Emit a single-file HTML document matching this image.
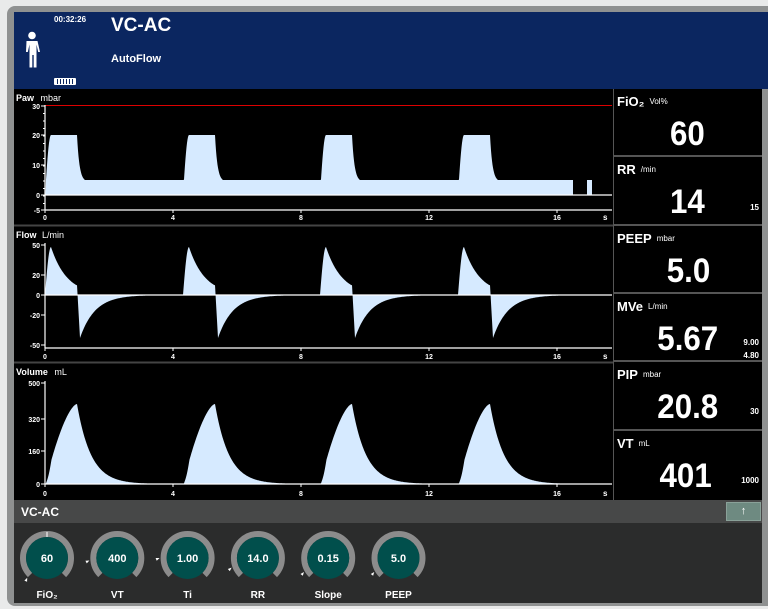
<!DOCTYPE html>
<html><head><meta charset="utf-8"><style>
*{margin:0;padding:0;box-sizing:border-box}
body{width:768px;height:609px;background:#e9eaea;position:relative;overflow:hidden;font-family:"Liberation Sans",Arial,sans-serif;font-weight:bold;color:#fff}
.frame{position:absolute;left:7px;top:6px;width:770px;height:600px;background:#8f9191;border-radius:8px}
.hdr{position:absolute;left:14px;top:12px;width:760px;height:77px;background:#0b2660}
.abs{position:absolute}
.panel{position:absolute;background:#000}
.np{position:absolute;left:613px;width:149px;background:#000;border-bottom:2px solid #555;border-left:1px solid #555}
.np .l{position:absolute;left:3px;top:5px;font-size:13px}
.np .l small{font-size:8px;font-weight:normal;margin-left:5px;vertical-align:2px}
.np .v{position:absolute;top:26px;font-size:34px;transform:scaleX(0.92);transform-origin:right center}
.np .s{position:absolute;right:3px;font-size:8px}
</style></head><body>
<div class="frame"></div>
<div class="hdr">
<svg class="abs" style="left:9px;top:19px" width="18" height="38" viewBox="0 0 18 38"><circle cx="9" cy="4.5" r="3.8" fill="#fff"/><path d="M3.5 10h11l2.5 11h-1.8l-1.7-7.5v23h-2.8v-12.5h-1.4v12.5h-2.8v-23l-1.7 7.5h-1.8z" fill="#fff"/></svg>
<div class="abs" style="left:40px;top:3px;font-size:8px">00:32:26</div>
<div class="abs" style="left:40px;top:66px;width:22px;height:7px;border:1px solid #fff;border-radius:1px;background:repeating-linear-gradient(90deg,#fff 0 2px,#0b2660 2px 3px)"></div>
<div class="abs" style="left:97px;top:3px;font-size:19px">VC-AC</div>
<div class="abs" style="left:97px;top:41px;font-size:11px">AutoFlow</div>
</div>
<div class="panel" style="left:14px;top:89px;width:599px;height:411px"></div>
<svg class="abs" style="left:0;top:0" width="768" height="609" font-family="Liberation Sans,Arial,sans-serif">
<g fill="#fff" font-size="9" font-weight="bold"><text x="16" y="101">Paw <tspan font-weight="normal" dx="4">mbar</tspan></text>
<text x="16" y="238">Flow <tspan font-weight="normal" dx="3">L/min</tspan></text>
<text x="16" y="375">Volume <tspan font-weight="normal" dx="4">mL</tspan></text></g>
<line x1="14" y1="225.5" x2="613" y2="225.5" stroke="#444" stroke-width="2"/>
<line x1="14" y1="362.5" x2="613" y2="362.5" stroke="#444" stroke-width="2"/>
<line x1="45" y1="105.5" x2="612" y2="105.5" stroke="#d00" stroke-width="1"/>
<path id="paw" fill="#d6eaff"/>
<path id="flow" fill="#d6eaff"/>
<path id="vol" fill="#d6eaff"/>
<g stroke="#fff" stroke-width="1.2">
<line x1="45" y1="105" x2="45" y2="210"/><line x1="45" y1="210" x2="612" y2="210"/><line x1="45" y1="195" x2="612" y2="195"/>
<line x1="45" y1="243" x2="45" y2="348"/><line x1="45" y1="348" x2="612" y2="348"/><line x1="45" y1="295" x2="612" y2="295"/>
<line x1="45" y1="381" x2="45" y2="484"/><line x1="45" y1="484" x2="612" y2="484"/>
</g>
<g id="ticks" stroke="#fff" stroke-width="1"></g>
<g id="lbls" fill="#fff" font-size="7" font-weight="bold"></g>
</svg>
<div class="np" style="top:89px;height:68px"><div class="l">FiO₂<small>Vol%</small></div><div class="v" style="right:57px">60</div></div>
<div class="np" style="top:157px;height:69px"><div class="l">RR<small>/min</small></div><div class="v" style="right:57px">14</div><div class="s" style="top:46px">15</div></div>
<div class="np" style="top:226px;height:68px"><div class="l">PEEP<small>mbar</small></div><div class="v" style="right:52px">5.0</div></div>
<div class="np" style="top:294px;height:68px"><div class="l">MVe<small>L/min</small></div><div class="v" style="right:44px">5.67</div><div class="s" style="top:44px">9.00</div><div class="s" style="top:57px">4.80</div></div>
<div class="np" style="top:362px;height:69px"><div class="l">PIP<small>mbar</small></div><div class="v" style="right:44px">20.8</div><div class="s" style="top:45px">30</div></div>
<div class="np" style="top:431px;height:69px;border-bottom:0"><div class="l">VT<small>mL</small></div><div class="v" style="right:50px">401</div><div class="s" style="top:45px">1000</div></div>
<div class="abs" style="left:14px;top:500px;width:748px;height:23px;background:#474848"><div class="abs" style="left:7px;top:5px;font-size:12px">VC-AC</div>
<div class="abs" style="left:712px;top:2px;width:35px;height:19px;background:#6e8a81;border:1px solid #8aa199;text-align:center;font-size:11px;line-height:17px">↑</div></div>
<div class="abs" style="left:14px;top:523px;width:748px;height:80px;background:#2b2c2c"></div>
<svg class="abs" style="left:0;top:520px" width="768" height="89" id="knobs" font-family="Liberation Sans,Arial,sans-serif"></svg>
<script>
function P(x0,y0,pts){let d='M'+x0+' '+y0;pts.forEach(p=>d+='L'+p[0].toFixed(1)+' '+p[1].toFixed(1));return d+'Z';}
const st=[45,183,320,458];
let pw=[];
for(let x=45;x<=573;x+=0.5){let v=5;for(const s of st){let t=x-s;if(t>=0&&t<50){if(t<6)v=Math.max(v,20*Math.sin(t/6*Math.PI/2));else if(t<32)v=20;else if(t<40)v=20-15*(1-Math.exp(-(t-32)/2.5))/(1-Math.exp(-3.2));else v=5;v=Math.min(20,Math.max(5,v));}}if(x<46)v=0;pw.push([x,195-v*3]);}
pw.push([573,195]);
document.getElementById('paw').setAttribute('d',P(45,195,pw)+'M587 195L587 180L592 180L592 195Z');
let fl=[];
for(let x=45;x<=612;x+=0.5){let v=0;for(const s of st){let t=x-s;if(t>=0&&t<6)v=48*Math.sin(t/6*Math.PI/2);else if(t>=6&&t<32)v=48*Math.exp(-(t-6)/16);else if(t>=32&&t<35)v=10-(t-32)/3*53;else if(t>=35&&t<137)v=Math.min(v,-43*Math.exp(-(t-35)/15));}fl.push([x,295-v]);}
document.getElementById('flow').setAttribute('d',P(45,295,fl)+'L612 295Z');
let vo=[];
for(let x=45;x<=612;x+=0.5){let v=0;for(const s of st){let t=x-s;if(t>=0&&t<32){let u=t/32;v=400*(1-Math.pow(1-u,1.6))*Math.min(1,u*4+0.2)*(u<0.05?u/0.05:1);}else if(t>=32&&t<137)v=Math.max(v,400*Math.exp(-(t-32)/14));}vo.push([x,484-v*0.2]);}
document.getElementById('vol').setAttribute('d',P(45,484,vo)+'L612 484Z');
let tk='',lb='';
function yl(vals,ys,x){vals.forEach((v,i)=>{tk+=`<line x1="41" x2="45" y1="${ys[i]}" y2="${ys[i]}"/>`;lb+=`<text x="${x}" y="${ys[i]+3}" text-anchor="end">${v}</text>`;});}
yl([30,20,10,0,-5],[106,135,165,195,210],40);
yl([50,20,0,-20,-50],[245,275,295,315,345],40);
yl([500,320,160,0],[383,419,451,484],40);
for(let y=106;y<210;y+=7.5)tk+=`<line x1="43" x2="45" y1="${y}" y2="${y}"/>`;
[[210,218],[348,357],[484,494]].forEach(([ay,ly])=>{[0,4,8,12,16].forEach((n,i)=>{let x=45+i*128;tk+=`<line x1="${x}" x2="${x}" y1="${ay}" y2="${ay+3}"/>`;lb+=`<text x="${x}" y="${ly+2}" text-anchor="middle">${n}</text>`;});lb+=`<text x="603" y="${ly+2}" font-size="8">s</text>`;});
document.getElementById('ticks').innerHTML=tk;document.getElementById('lbls').innerHTML=lb;
const K=[['60','FiO₂',225],['400','VT',185],['1.00','Ti',180],['14.0','RR',200],['0.15','Slope',210],['5.0','PEEP',210]];
let ks='';
K.forEach((k,i)=>{let cx=47+i*70.3,cy=38,r=24;
function pt(a,rr){let rad=a*Math.PI/180;return [cx+rr*Math.cos(rad),cy-rr*Math.sin(rad)];}
let a=pt(225,r),b=pt(-45,r);
ks+=`<path d="M${a[0]} ${a[1]}A${r} ${r} 0 1 1 ${b[0]} ${b[1]}" stroke="#8c8c8c" stroke-width="6" fill="none"/>`;
ks+=`<circle cx="${cx}" cy="${cy}" r="21" fill="#014f4c"/>`;
ks+=`<text x="${cx}" y="${cy+4}" text-anchor="middle" font-size="11" font-weight="bold" fill="#fff">${k[0]}</text>`;
ks+=`<text x="${cx}" y="78" text-anchor="middle" font-size="10" font-weight="bold" fill="#fff">${k[1]}</text>`;
let m=pt(k[2],28),n=pt(k[2],32);let p1=pt(k[2]+5,31);
ks+=`<path d="M${n[0]} ${n[1]}L${m[0]} ${m[1]}L${p1[0]} ${p1[1]}Z" fill="#fff"/>`;
if(i==0){let q=pt(90,21),q2=pt(90,26);ks+=`<line x1="${q[0]}" y1="${q[1]}" x2="${q2[0]}" y2="${q2[1]}" stroke="#fff"/>`;}
});
document.getElementById('knobs').innerHTML=ks;
</script>
</body></html>
